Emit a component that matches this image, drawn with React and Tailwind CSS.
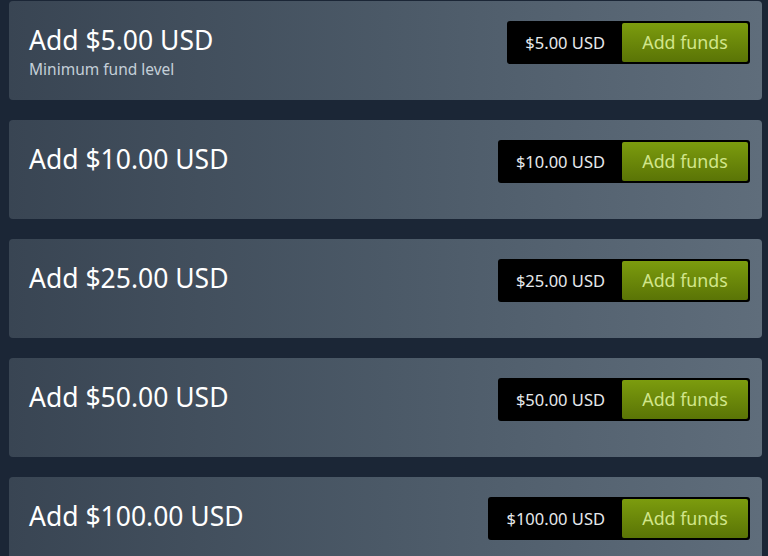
const amounts = [
  { value: '$5.00', note: 'Minimum fund level' },
  { value: '$10.00' },
  { value: '$25.00' },
  { value: '$50.00' },
  { value: '$100.00' },
]

export default function App() {
  return (
    <div
      className="min-h-screen w-full overflow-hidden bg-[#1b2636] pl-[9px] pr-[6px] pt-[1px]"
      style={{ fontFamily: '"Noto Sans", "Open Sans", Arial, sans-serif' }}
    >
      <div className="flex flex-col gap-[20px]">
        {amounts.map((a) => (
          <FundRow key={a.value} value={a.value} note={a.note} />
        ))}
      </div>
    </div>
  )
}

function FundRow({ value, note }) {
  return (
    <div className="flex h-[99px] shrink-0 items-start justify-between rounded-[4px] bg-gradient-to-r from-[#394553] via-[#4b5967] to-[#5f6d7b] pl-[20px] pr-[12px]">
      <div className="pt-[22px]">
        <div className="text-[26.5px] leading-[34px] text-white">Add {value} USD</div>
        {note && <div className="mt-[2px] text-[15.5px] leading-[20px] text-[#c4cfd8]">{note}</div>}
      </div>
      <div className="mt-[20px] flex items-center rounded-[3px] bg-black p-[2px]">
        <span className="pt-[2px] pl-[16px] pr-[17px] text-[16.5px] text-[#e6e9ec]">{value} USD</span>
        <button className="h-[39px] w-[126px] rounded-[2px] bg-gradient-to-b from-[#7c9c0e] to-[#5a7406] text-[17.8px] text-[#d2e68a]">
          Add funds
        </button>
      </div>
    </div>
  )
}
